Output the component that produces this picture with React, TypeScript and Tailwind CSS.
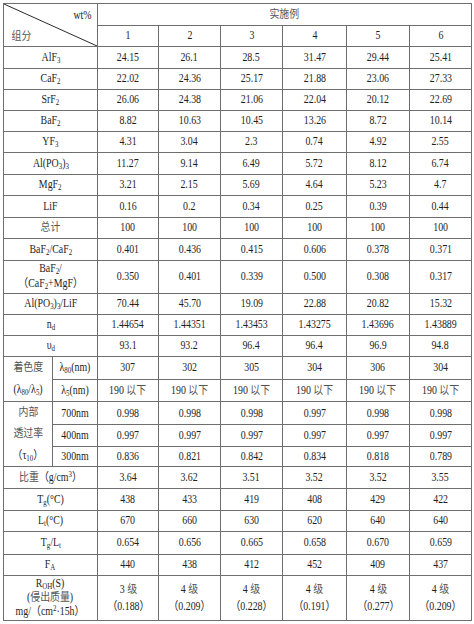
import React from 'react';

type Row = { label: React.ReactNode; h: number; vals: React.ReactNode[] };

const cell = 'border border-[#6e6e6e] p-0 text-center align-middle';

// the scan is squeezed sideways, so the glyphs are narrowed a little
const T = ({ children }: { children: React.ReactNode }) => (
  <span className="inline-block scale-x-[0.86] whitespace-nowrap">{children}</span>
);

// CJK fallback is a heavy sans; soften it towards the thin song face of the scan
const C = ({ children }: { children: React.ReactNode }) => <span className="text-[#555]">{children}</span>;

const S = ({ children }: { children: React.ReactNode }) => <sub className="text-[8px]">{children}</sub>;

const rep = (v: React.ReactNode) => [v, v, v, v, v, v];

const topRows: Row[] = [
  { label: <>AlF<S>3</S></>, h: 22, vals: ['24.15', '26.1', '28.5', '31.47', '29.44', '25.41'] },
  { label: <>CaF<S>2</S></>, h: 21, vals: ['22.02', '24.36', '25.17', '21.88', '23.06', '27.33'] },
  { label: <>SrF<S>2</S></>, h: 21, vals: ['26.06', '24.38', '21.06', '22.04', '20.12', '22.69'] },
  { label: <>BaF<S>2</S></>, h: 21, vals: ['8.82', '10.63', '10.45', '13.26', '8.72', '10.14'] },
  { label: <>YF<S>3</S></>, h: 21, vals: ['4.31', '3.04', '2.3', '0.74', '4.92', '2.55'] },
  { label: <>Al(PO<S>3</S>)<S>3</S></>, h: 22, vals: ['11.27', '9.14', '6.49', '5.72', '8.12', '6.74'] },
  { label: <>MgF<S>2</S></>, h: 21, vals: ['3.21', '2.15', '5.69', '4.64', '5.23', '4.7'] },
  { label: 'LiF', h: 22, vals: ['0.16', '0.2', '0.34', '0.25', '0.39', '0.44'] },
  { label: <C>总计</C>, h: 21, vals: rep('100') },
  { label: <>BaF<S>2</S>/CaF<S>2</S></>, h: 22, vals: ['0.401', '0.436', '0.415', '0.606', '0.378', '0.371'] },
  {
    label: (
      <div className="leading-[15px]">
        <div>BaF<S>2</S>/</div>
        <div>（CaF<S>2</S>+MgF）</div>
      </div>
    ),
    h: 33,
    vals: ['0.350', '0.401', '0.339', '0.500', '0.308', '0.317'],
  },
  { label: <>Al(PO<S>3</S>)<S>3</S>/LiF</>, h: 21, vals: ['70.44', '45.70', '19.09', '22.88', '20.82', '15.32'] },
  { label: <>n<S>d</S></>, h: 21, vals: ['1.44654', '1.44351', '1.43453', '1.43275', '1.43696', '1.43889'] },
  { label: <>υ<S>d</S></>, h: 21, vals: ['93.1', '93.2', '96.4', '96.4', '96.9', '94.8'] },
];

const bottomRows: Row[] = [
  {
    label: (
      <>
        <C>比重</C>（g/cm<sup className="text-[8px]">3</sup>）
      </>
    ),
    h: 22,
    vals: ['3.64', '3.62', '3.51', '3.52', '3.52', '3.55'],
  },
  { label: <>T<S>g</S>(°C)</>, h: 22, vals: ['438', '433', '419', '408', '429', '422'] },
  { label: <>L<S>t</S>(°C)</>, h: 21, vals: ['670', '660', '630', '620', '640', '640'] },
  { label: <>T<S>g</S>/L<S>t</S></>, h: 23, vals: ['0.654', '0.656', '0.665', '0.658', '0.670', '0.659'] },
  { label: <>F<S>A</S></>, h: 21, vals: ['440', '438', '412', '452', '409', '437'] },
];

const grade = (g: string, v: string) => (
  <div className="leading-[17px]">
    <div>
      {g} <C>级</C>
    </div>
    <div>（{v}）</div>
  </div>
);

const Vals = ({ vals }: { vals: React.ReactNode[] }) => (
  <>
    {vals.map((v, i) => (
      <td key={i} className={cell}>
        <T>{v}</T>
      </td>
    ))}
  </>
);

const below = (
  <>
    190 <C>以下</C>
  </>
);

export default function App() {
  return (
    <div
      className="bg-white min-h-screen pl-[3px] pt-[3px] text-[#1e1e1e] text-[11.5px]"
      style={{ fontFamily: '"Liberation Serif", "Noto Sans CJK SC", serif' }}
    >
      <table className="table-fixed border-collapse w-[468px]">
        <colgroup>
          <col className="w-[49px]" />
          <col className="w-[45px]" />
          <col className="w-[61px]" />
          <col className="w-[62px]" />
          <col className="w-[62px]" />
          <col className="w-[64px]" />
          <col className="w-[63px]" />
          <col className="w-[62px]" />
        </colgroup>
        <tbody>
          <tr className="h-[21px]">
            <td rowSpan={2} colSpan={2} className={`${cell} relative`}>
              <svg className="absolute inset-0 w-full h-full" preserveAspectRatio="none" viewBox="0 0 100 100">
                <line x1="0" y1="0" x2="100" y2="100" stroke="#2a2a2a" strokeWidth="1" vectorEffect="non-scaling-stroke" />
              </svg>
              <div className="relative flex flex-col h-[42px]">
                <div className="text-right pr-[4px] pt-[4px] leading-[14px]">
                  <T>wt%</T>
                </div>
                <div className="text-left pl-[6px] pt-[7px] leading-[14px]">
                  <T>
                    <C>组分</C>
                  </T>
                </div>
              </div>
            </td>
            <td colSpan={6} className={cell}>
              <T>
                <C>实施例</C>
              </T>
            </td>
          </tr>
          <tr className="h-[21px]">
            {['1', '2', '3', '4', '5', '6'].map((c) => (
              <td key={c} className={cell}>
                <T>{c}</T>
              </td>
            ))}
          </tr>
          {topRows.map((r, i) => (
            <tr key={i} style={{ height: r.h }}>
              <td colSpan={2} className={cell}>
                <T>{r.label}</T>
              </td>
              <Vals vals={r.vals} />
            </tr>
          ))}
          <tr className="h-[22px]">
            <td rowSpan={2} className={cell}>
              <div className="flex flex-col justify-around h-[44px]">
                <div>
                  <T>
                    <C>着色度</C>
                  </T>
                </div>
                <div>
                  <T>
                    (λ<S>80</S>/λ<S>5</S>)
                  </T>
                </div>
              </div>
            </td>
            <td className={cell}>
              <T>
                λ<S>80</S>(nm)
              </T>
            </td>
            <Vals vals={['307', '302', '305', '304', '306', '304']} />
          </tr>
          <tr className="h-[22px]">
            <td className={cell}>
              <T>
                λ<S>5</S>(nm)
              </T>
            </td>
            <Vals vals={rep(below)} />
          </tr>
          <tr className="h-[23px]">
            <td rowSpan={3} className={cell}>
              <div className="flex flex-col justify-around h-[64px]">
                <div>
                  <T>
                    <C>内部</C>
                  </T>
                </div>
                <div>
                  <T>
                    <C>透过率</C>
                  </T>
                </div>
                <div>
                  <T>
                    （τ<S>10</S>）
                  </T>
                </div>
              </div>
            </td>
            <td className={cell}>
              <T>700nm</T>
            </td>
            <Vals vals={['0.998', '0.998', '0.998', '0.997', '0.998', '0.998']} />
          </tr>
          <tr className="h-[21px]">
            <td className={cell}>
              <T>400nm</T>
            </td>
            <Vals vals={rep('0.997')} />
          </tr>
          <tr className="h-[20px]">
            <td className={cell}>
              <T>300nm</T>
            </td>
            <Vals vals={['0.836', '0.821', '0.842', '0.834', '0.818', '0.789']} />
          </tr>
          {bottomRows.map((r, i) => (
            <tr key={i} style={{ height: r.h }}>
              <td colSpan={2} className={cell}>
                <T>{r.label}</T>
              </td>
              <Vals vals={r.vals} />
            </tr>
          ))}
          <tr className="h-[45px]">
            <td colSpan={2} className={cell}>
              <T>
                <div className="leading-[14px]">
                  <div>
                    R<S>OH</S>(S)
                  </div>
                  <div>
                    (<C>侵出质量</C>)
                  </div>
                  <div>
                    mg/（cm<sup className="text-[8px]">2</sup>·15h）
                  </div>
                </div>
              </T>
            </td>
            <Vals
              vals={[
                grade('3', '0.188'),
                grade('4', '0.209'),
                grade('4', '0.228'),
                grade('4', '0.191'),
                grade('4', '0.277'),
                grade('4', '0.209'),
              ]}
            />
          </tr>
        </tbody>
      </table>
    </div>
  );
}
